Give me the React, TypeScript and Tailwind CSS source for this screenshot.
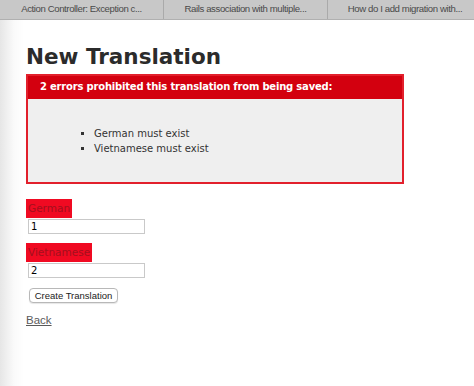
import React from 'react';

const tabs = [
  'Action Controller: Exception c...',
  'Rails association with multiple...',
  'How do I add migration with...',
];

function Field({ label, value }: { label: string; value: string }) {
  return (
    <div className="flex flex-col items-start">
      <div className="bg-[#f00a22] px-[2px] py-[2px] text-[10.5px] leading-[15px] text-[#a3101d]">{label}</div>
      <input
        type="text"
        defaultValue={value}
        className="ml-[2px] mt-[1px] h-[15px] w-[117px] border border-[#c9c9c9] bg-white px-[2px] text-[10px] leading-[13px] text-black outline-none"
      />
    </div>
  );
}

export default function App() {
  return (
    <div className="flex h-[386px] w-[474px] flex-col overflow-hidden bg-white font-['DejaVu_Sans',sans-serif]">
      {/* Browser tabs */}
      <div className="flex h-[20px] shrink-0 border-b border-[#b0b0b0] bg-[#c8c8c8]">
        {tabs.map((t, i) => (
          <div
            key={t}
            className={`flex items-center justify-center font-['Liberation_Sans',sans-serif] text-[9.6px] tracking-[-0.4px] text-[#4a4a4a] ${
              i < 2 ? 'w-[164px] flex-none border-r border-[#aaaaaa]' : 'w-[146px] flex-none pl-[8px]'
            }`}
          >
            {t}
          </div>
        ))}
      </div>

      {/* Page */}
      <div className="flex-1 bg-[linear-gradient(to_right,#e6e6e6,#fafafa_14px,#ffffff_24px)] pl-[26px] pt-[24px]">
        <h1 className="text-[21.5px] font-bold leading-[26px] text-[#2b2b2b]">New Translation</h1>

        <div className="mt-[4px] w-[378px] border-2 border-[#e2202c] bg-[#efefef]">
          <div className="bg-[#d3000f] pb-[5px] pl-[12px] pt-[4px] text-[10px] font-bold leading-[14px] tracking-[-0.2px] text-white">
            2 errors prohibited this translation from being saved:
          </div>
          <ul className="list-[square] pb-[26px] pl-[66px] pt-[27px] text-[10px] leading-[15px] text-[#333]">
            <li>German must exist</li>
            <li>Vietnamese must exist</li>
          </ul>
        </div>

        <div className="mt-[15px] flex flex-col gap-[9px]">
          <Field label="German" value="1" />
          <Field label="Vietnamese" value="2" />
        </div>

        <button className="ml-[3px] mt-[10px] h-[15px] w-[89px] rounded-[4px] border border-[#b8b8b8] bg-white font-['Liberation_Sans',sans-serif] text-[9.5px] leading-[13px] text-[#222] shadow-[0_1px_1px_rgba(0,0,0,0.1)]">
          Create Translation
        </button>

        <div className="mt-[5px] leading-[16px]">
          <a href="#" className="font-['Liberation_Sans',sans-serif] text-[11.5px] text-[#5a5a5a] underline">
            Back
          </a>
        </div>
      </div>
    </div>
  );
}
